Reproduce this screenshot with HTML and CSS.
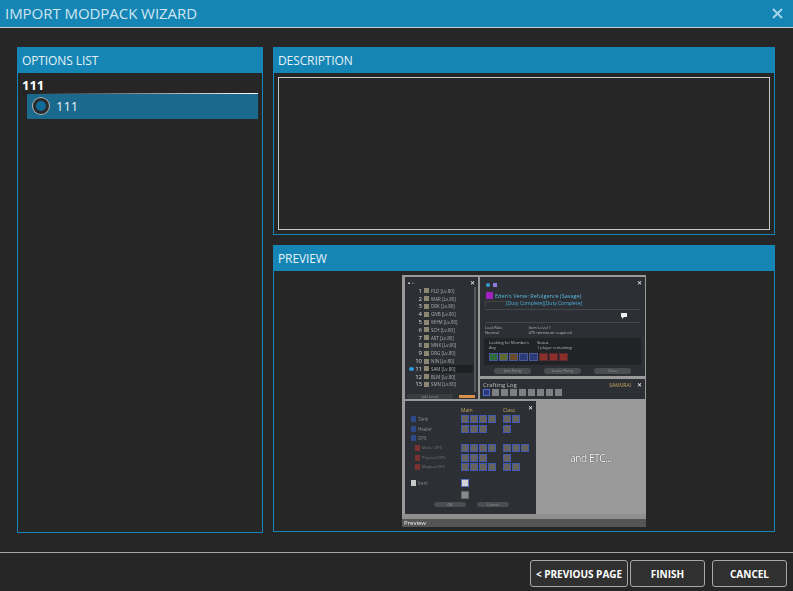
FILE: index.html
```html
<!DOCTYPE html>
<html lang="en">
<head>
  <meta charset="UTF-8">
  <title>Import Modpack Wizard</title>
  <link rel="stylesheet" href="styles.css">
</head>
<body>
<header class="titlebar">
  <span class="title">IMPORT MODPACK WIZARD</span>
  <svg class="close" width="11" height="11" viewBox="0 0 11 11"><path d="M1 1L10 10M10 1L1 10" stroke="#a5d3e8" stroke-width="2"/></svg>
</header>

<main class="content">
  <section class="panel options">
    <h2>OPTIONS LIST</h2>
    <div class="options-body">
      <div class="group-name">111</div>
      <div class="group-line"></div>
      <div class="option"><span class="radio"></span>111</div>
    </div>
  </section>

  <div class="right-col">
    <section class="panel description">
      <h2>DESCRIPTION</h2>
      <div class="description-body"><div class="description-box"></div></div>
    </section>

    <section class="panel preview">
      <h2>PREVIEW</h2>
      <div class="preview-body">
        <div class="shot">
          <div class="shot-top">
            <div class="win job-list">
              <div class="win-head"><span class="mini-glyphs">▪ ◦</span><span class="x">✕</span></div>
              <div class="jobs">
                <div class="job"><i></i><b>1</b><u></u>PLD [Lv.80]</div>
                <div class="job"><i></i><b>2</b><u></u>WAR [Lv.80]</div>
                <div class="job"><i></i><b>3</b><u></u>DRK [Lv.80]</div>
                <div class="job"><i></i><b>4</b><u></u>GNB [Lv.80]</div>
                <div class="job"><i></i><b>5</b><u></u>WHM [Lv.80]</div>
                <div class="job"><i></i><b>6</b><u></u>SCH [Lv.80]</div>
                <div class="job"><i></i><b>7</b><u></u>AST [Lv.80]</div>
                <div class="job"><i></i><b>8</b><u></u>MNK [Lv.80]</div>
                <div class="job"><i></i><b>9</b><u></u>DRG [Lv.80]</div>
                <div class="job"><i></i><b>10</b><u></u>NIN [Lv.80]</div>
                <div class="job current"><i></i><b>11</b><u></u>SAM [Lv.80]</div>
                <div class="job"><i></i><b>12</b><u></u>BLM [Lv.80]</div>
                <div class="job"><i></i><b>13</b><u></u>SMN [Lv.80]</div>
              </div>
              <div class="job-foot"><span class="pill wide">Job Level</span><span class="orange"></span></div>
            </div>
            <div class="shot-stack">
              <div class="win duty">
                <div class="win-head"><span class="duty-marks"><em class="globe"></em><em class="tag"></em></span><span class="x">✕</span></div>
                <div class="duty-title"><em class="purple"></em>Eden's Verse: Refulgence (Savage)</div>
                <div class="duty-sub"><em class="blank"></em>[Duty Complete][Duty Complete]</div>
                <div class="duty-chat">
                  <svg width="6" height="6" viewBox="0 0 6 6"><path d="M0 0H6V4H3L1 6V4H0Z" fill="#eee"/></svg>
                </div>
                <div class="duty-meta"><span>Loot Rule<br>Normal</span><span>Item Level 1<br>475 minimum required</span></div>
                <div class="party">
                  <div class="party-text"><span>Looking for Members<br>Any</span><span>Status<br>1 player remaining</span></div>
                  <div class="slots">
                    <em class="green"></em><em class="olive"></em><em class="brown"></em><em></em><em></em><em class="red"></em><em class="red"></em><em class="red"></em>
                  </div>
                </div>
                <div class="duty-actions"><span class="pill">Join Party</span><span class="pill">Leave Party</span><span class="pill">Close</span></div>
              </div>
              <div class="win craft">
                <div class="win-head"><span class="craft-name">Crafting Log</span><span class="craft-job">SAMURAI</span><span class="x">✕</span></div>
                <div class="craft-icons"><em class="on"></em><em></em><em></em><em></em><em></em><em></em><em></em><em></em><em></em></div>
              </div>
            </div>
          </div>

          <div class="shot-bottom">
            <div class="win gear">
              <div class="gear-row gear-head"><span class="gear-label"></span><span class="gear-set heads">Main</span><span class="gear-set heads">Class</span><span class="x">✕</span></div>
              <div class="gear-row"><span class="gear-label">Tank</span><span class="gear-set"><em></em><em></em><em></em><em></em></span><span class="gear-set"><em></em><em></em></span></div>
              <div class="gear-row"><span class="gear-label">Healer</span><span class="gear-set"><em></em><em></em><em></em></span><span class="gear-set"><em></em></span></div>
              <div class="gear-row"><span class="gear-label">DPS</span></div>
              <div class="gear-row"><span class="gear-label sub">Melee DPS</span><span class="gear-set"><em></em><em></em><em></em><em></em></span><span class="gear-set"><em></em><em></em><em></em></span></div>
              <div class="gear-row"><span class="gear-label sub">Physical DPS</span><span class="gear-set"><em></em><em></em><em></em></span><span class="gear-set"><em></em></span></div>
              <div class="gear-row"><span class="gear-label sub">Magical DPS</span><span class="gear-set"><em></em><em></em><em></em><em></em></span><span class="gear-set"><em></em><em></em></span></div>
              <div class="gear-row tall"><span class="gear-label item">Item</span><span class="gear-set"><em class="light"></em></span></div>
              <div class="gear-row"><span class="gear-label"></span><span class="gear-set"><em class="plain"></em></span></div>
              <div class="gear-buttons"><span class="pill">OK</span><span class="pill">Cancel</span></div>
            </div>
            <div class="etc">and ETC...</div>
          </div>

          <div class="shot-strip"></div>
          <div class="shot-bar">Preview</div>
        </div>
      </div>
    </section>
  </div>
</main>

<footer class="actions">
  <button class="prev">&lt; PREVIOUS PAGE</button>
  <button class="finish">FINISH</button>
  <button class="cancel">CANCEL</button>
</footer>
</body>
</html>
```

FILE: styles.css
```css
* {
  box-sizing: border-box;
}
html, body {
  margin: 0;
  height: 591px;
  overflow: hidden;
}
body {
  background: #262626;
  color: #fff;
  font-family: "Open Sans", "Noto Sans", sans-serif;
  display: flex;
  flex-direction: column;
}

/* title bar */
.titlebar {
  height: 28px;
  background: #1585b5;
  border-bottom: 1px solid #c4d0d6;
  display: flex;
  align-items: center;
  justify-content: space-between;
  padding: 0 10px 1px 5px;
}
.title {
  font-size: 15px;
  letter-spacing: -0.05px;
  color: #cfe6f1;
}

/* main columns */
.content {
  height: 506px;
  padding: 19px 18px 1px 17px;
  display: grid;
  grid-template-columns: 246px 502px;
  gap: 10px;
}
.right-col {
  display: flex;
  flex-direction: column;
  gap: 10px;
}
.panel {
  border: 1px solid #1585b5;
  display: flex;
  flex-direction: column;
}
.panel h2 {
  margin: 0;
  height: 25px;
  background: #1585b5;
  font-size: 12px;
  font-weight: 400;
  line-height: 25px;
  padding-left: 4px;
  letter-spacing: -0.1px;
  color: #e4f2f8;
}
.description {
  height: 188px;
}
.preview {
  height: 287px;
}

/* options */
.options-body {
  padding: 5px 4px 0 4px;
}
.group-name {
  font-size: 13px;
  font-weight: 700;
  line-height: 15px;
  height: 15px;
}
.group-line {
  height: 1px;
  background: linear-gradient(to right, #1a1a1a, #fff);
  width: 236px;
}
.option {
  margin-left: 5px;
  width: 231px;
  height: 25px;
  background: #1b6a8e;
  display: flex;
  align-items: center;
  font-size: 13px;
  color: #e6f1f5;
  padding: 0 0 2px 6px;
}
.radio {
  width: 16px;
  height: 16px;
  border-radius: 50%;
  background: #0f6c99;
  border: 3px solid #2a2a2a;
  box-shadow: 0 0 0 1px #aab2b6;
  margin-right: 7px;
}

/* description */
.description-body {
  flex: 1;
  padding: 4px;
}
.description-box {
  height: 100%;
  border: 1px solid #c8c8c8;
}

/* preview picture, a small screenshot of the game */
.preview-body {
  flex: 1;
  display: flex;
  align-items: center;
  justify-content: center;
}
.shot {
  width: 244px;
  height: 252px;
  background: #9a9a9a;
  padding-top: 2px;
  display: flex;
  flex-direction: column;
  filter: blur(0.45px);
  overflow: hidden;
  font-size: 5px;
  line-height: 6px;
  color: #bbb;
}
.shot-top {
  display: flex;
  height: 122px;
  padding-left: 3px;
  gap: 2px;
}
.shot-stack {
  width: 165px;
  display: flex;
  flex-direction: column;
  gap: 3px;
}
.win {
  background: #2c2f33;
}
.win-head {
  display: flex;
  justify-content: space-between;
  align-items: center;
  height: 10px;
  padding: 1px 3px 0 3px;
}
.x {
  color: #fff;
  font-size: 6px;
  line-height: 6px;
}
.mini-glyphs {
  color: #eee;
  font-size: 6px;
}

/* job list */
.job-list {
  width: 73px;
  height: 122px;
  display: flex;
  flex-direction: column;
}
.jobs {
  height: 105px;
  margin-right: 2px;
  border-right: 2px solid #55585c;
}
.job {
  height: 7.8px;
  display: flex;
  align-items: center;
  white-space: nowrap;
  font-size: 4.5px;
  margin-right: 1px;
  color: #aeb0b2;
}
.job i {
  width: 5px;
  margin-left: 4px;
  height: 4px;
}
.job b {
  width: 8px;
  font-size: 6px;
  text-align: right;
  color: #ddd;
  font-weight: 400;
}
.job u {
  width: 5px;
  height: 5px;
  margin: 0 2px;
  background: #8d8672;
}
.job.current {
  background: linear-gradient(to right, #2c2f33 22px, #1f2022 22px);
}
.job.current i {
  background: #2f9be0;
  border-radius: 50%;
}
.job-foot {
  display: flex;
  align-items: center;
  padding: 2px 2px 0 2px;
  gap: 6px;
}
.pill {
  display: block;
  height: 5px;
  background: #4b4d50;
  border-radius: 3px;
  font-size: 4px;
  line-height: 5px;
  text-align: center;
  color: #999;
}
.pill.wide {
  width: 46px;
  background: #3a3c40;
}
.orange {
  width: 16px;
  height: 3px;
  background: #d8904a;
}

/* duty window */
.duty {
  height: 99px;
}
.duty-marks {
  display: flex;
  gap: 3px;
  padding: 4px 0 0 3px;
}
.duty-marks em {
  display: block;
  width: 4px;
  height: 4px;
}
.globe {
  background: #3d9bd4;
  border-radius: 50%;
}
.tag {
  background: #8a7ce0;
}
.duty-title {
  display: flex;
  align-items: center;
  color: #58b7e0;
  font-size: 5.5px;
  white-space: nowrap;
  padding: 5px 0 0 6px;
  height: 12px;
}
.purple {
  display: block;
  width: 7px;
  height: 7px;
  background: #a020c0;
  margin-right: 2px;
}
.duty-sub {
  display: flex;
  align-items: center;
  color: #4fb0de;
  font-size: 5px;
  white-space: nowrap;
  padding-left: 5px;
  height: 8px;
}
.blank {
  display: block;
  width: 21px;
  height: 5px;
  border-left: 1px solid #444;
  border-top: 1px solid #444;
}
.duty-chat {
  margin: 2px 5px 0 5px;
  height: 14px;
  border-top: 1px solid #44474b;
  border-bottom: 1px solid #44474b;
  display: flex;
  justify-content: flex-end;
  align-items: center;
  padding-right: 13px;
}
.duty-chat svg {
  display: block;
}
.duty-meta {
  display: flex;
  gap: 26px;
  padding: 2px 5px;
  height: 15px;
  font-size: 4px;
  line-height: 5px;
}
.party {
  margin: 0 4px;
  height: 27px;
  background: #222326;
  padding: 2px 5px;
}
.party-text {
  display: flex;
  gap: 8px;
  font-size: 4px;
  line-height: 5px;
  height: 13px;
}
.slots {
  display: flex;
  gap: 1px;
}
.slots em {
  display: block;
  width: 9px;
  height: 8px;
  background: #2c3a78;
  border: 1px solid #4a5a9a;
}
.slots .green {
  background: #2d6b3a;
}
.slots .olive {
  background: #5e6a30;
}
.slots .brown {
  background: #6b4a2a;
}
.slots .red {
  background: #8a2f2a;
  border-color: #5a2a30;
}
.duty-actions {
  display: flex;
  gap: 13px;
  padding: 3px 0 0 14px;
}
.duty-actions .pill {
  width: 37px;
  height: 6px;
}

/* crafting strip */
.craft {
  height: 20px;
}
.craft-name {
  color: #bbb;
  font-size: 6px;
}
.craft-job {
  margin-left: auto;
  margin-right: 6px;
  color: #c8a860;
  font-size: 5px;
}
.craft-icons {
  display: flex;
  gap: 2px;
  padding-left: 3px;
}
.craft-icons em {
  display: block;
  width: 7px;
  height: 7px;
  background: #7e8084;
}
.craft-icons .on {
  background: #2c3a78;
  border: 1px solid #4a6ad0;
}

/* gear window */
.shot-bottom {
  display: flex;
  height: 113px;
  margin-top: 2px;
  padding-left: 3px;
}
.gear {
  width: 131px;
  padding-top: 5px;
}
.gear-row {
  display: flex;
  align-items: center;
  height: 9.7px;
  padding-left: 6px;
  position: relative;
}
.gear-head {
  height: 8px;
  color: #c0a868;
}
.gear-head .x {
  position: absolute;
  right: 3px;
  top: -1px;
}
.gear-row.tall {
  height: 18px;
  padding-top: 4px;
}
.gear-label {
  width: 50px;
  display: flex;
  align-items: center;
  gap: 2px;
  font-size: 4.5px;
  color: #8a8d90;
  white-space: nowrap;
  flex-shrink: 0;
}
.gear-label:not(:empty)::before {
  content: "";
  width: 5px;
  height: 6px;
  background: #2e4a86;
}
.gear-label.sub {
  padding-left: 4px;
  font-size: 4px;
  color: #777;
}
.gear-label.sub::before {
  background: #7a3230;
}
.gear-label.item::before {
  background: #c8c8c8;
}
.gear-set {
  width: 42px;
  display: flex;
  gap: 1px;
  flex-shrink: 0;
}
.gear-set em {
  display: block;
  width: 8px;
  height: 8px;
  background: #66635f;
  border: 1px solid #4058b0;
}
.gear-set .light {
  background: #d4d4d4;
  border-color: #5a70c0;
}
.gear-set .plain {
  background: #8a8a8a;
  border-color: #666;
}
.gear-buttons {
  display: flex;
  gap: 11px;
  padding: 2px 0 0 29px;
}
.gear-buttons .pill {
  width: 32px;
}
.etc {
  flex: 1;
  display: flex;
  align-items: center;
  justify-content: center;
  font-size: 10px;
  letter-spacing: -0.4px;
  color: #fff;
  text-shadow: 0 0 1px #000;
}
.shot-strip {
  height: 5px;
  background: #8f8f8f;
}
.shot-bar {
  height: 8px;
  background: #555;
  color: #eee;
  font-size: 6px;
  line-height: 8px;
  padding-left: 2px;
}

/* footer buttons */
.actions {
  margin-top: 18px;
  border-top: 1px solid #a8a8a8;
  padding: 7px 6px 0 0;
  display: flex;
  justify-content: flex-end;
}
.actions button {
  height: 27px;
  background: #303030;
  border: 1px solid #a8a8a8;
  border-radius: 3px;
  color: #fff;
  font-family: inherit;
  font-size: 10px;
  font-weight: 700;
  padding: 0;
  white-space: nowrap;
}
.prev {
  width: 98px;
  margin-right: 2px;
}
.finish {
  width: 75px;
  margin-right: 7px;
}
.cancel {
  width: 75px;
}
```
